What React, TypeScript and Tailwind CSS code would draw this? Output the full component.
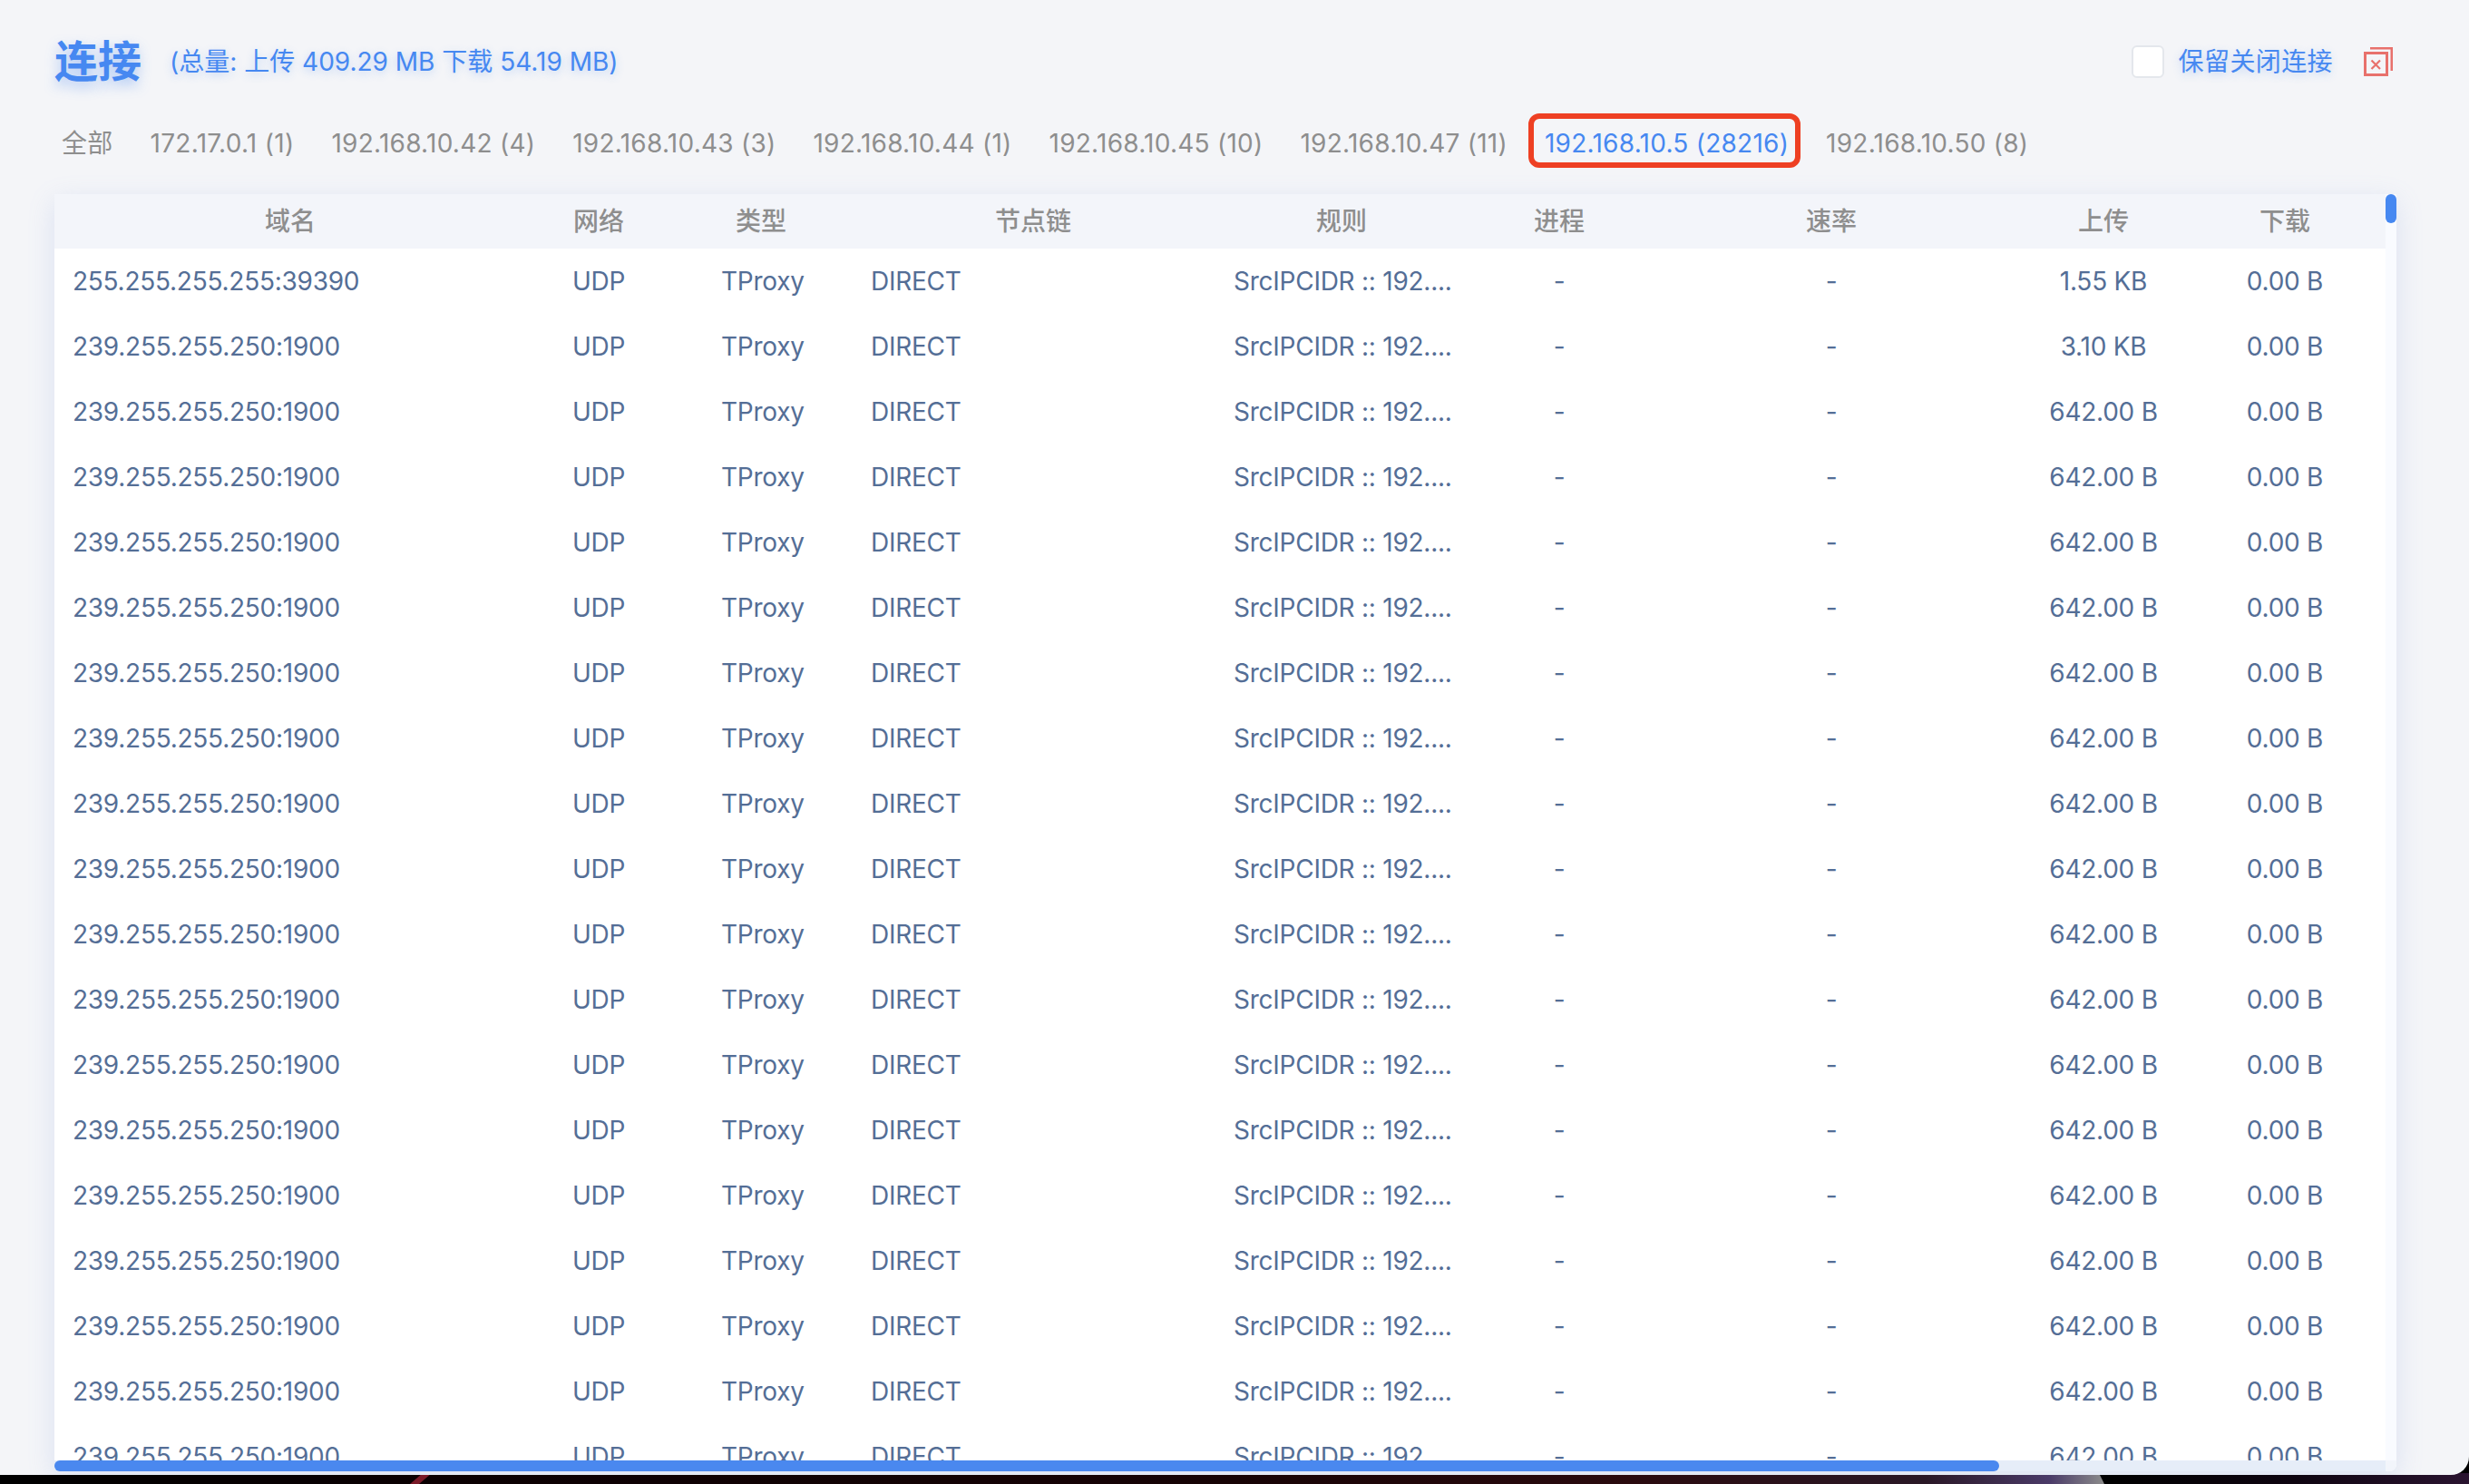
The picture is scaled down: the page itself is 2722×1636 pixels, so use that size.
import React from "react";

const tabs = [
  "全部",
  "172.17.0.1 (1)",
  "192.168.10.42 (4)",
  "192.168.10.43 (3)",
  "192.168.10.44 (1)",
  "192.168.10.45 (10)",
  "192.168.10.47 (11)",
  "192.168.10.5 (28216)",
  "192.168.10.50 (8)",
];

const rows = Array.from({ length: 19 }, (_, i) => ({
  host: i === 0 ? "255.255.255.255:39390" : "239.255.255.250:1900",
  up: i === 0 ? "1.55 KB" : i === 1 ? "3.10 KB" : "642.00 B",
}));

function CloseAll() {
  return (
    <svg width="32" height="32" viewBox="0 0 32 32" fill="none" stroke="#e8716c">
      <rect x="1.5" y="6.5" width="24" height="24" strokeWidth="3" />
      <path d="M7 1.25H30.75V26" strokeWidth="2.5" />
      <path d="M8.5 14.5L18 24M18 14.5L8.5 24" strokeWidth="2.2" />
    </svg>
  );
}

export default function App() {
  return (
    <div className="relative w-[2722px] h-[1636px] overflow-hidden bg-black font-['Inter','Noto_Sans_CJK_SC',sans-serif]">
      <svg className="absolute left-0 bottom-0" width="2722" height="12" viewBox="0 0 2722 12">
        <defs>
          <linearGradient id="wall" x1="0" x2="1" y1="0" y2="0">
            <stop offset="0" stopColor="#000000" />
            <stop offset="0.16" stopColor="#0a0002" />
            <stop offset="0.5" stopColor="#170305" />
            <stop offset="0.66" stopColor="#2a0a0e" />
            <stop offset="0.78" stopColor="#2a1826" />
            <stop offset="0.83" stopColor="#4a3a68" />
            <stop offset="0.852" stopColor="#8a8a8a" />
            <stop offset="0.853" stopColor="#000000" />
            <stop offset="0.93" stopColor="#0e0410" />
            <stop offset="1" stopColor="#2a1430" />
          </linearGradient>
        </defs>
        <rect width="2722" height="12" fill="url(#wall)" />
        <polygon points="452,12 466,0 476,0 462,12" fill="#7a1a28" />
        <polygon points="2314,0 2330,0 2330,12 2320,12" fill="#000000" />
      </svg>

      <div className="relative h-[1626px] overflow-hidden rounded-br-[20px] bg-[#f4f5f8]">
        <header className="flex h-[136px] items-center pl-[60px] pr-[84px]">
          <h1 className="text-[48px] font-bold leading-none text-[#4688f1] [text-shadow:0_6px_14px_rgba(70,136,241,0.4)]">
            连接
          </h1>
          <span className="ml-[31px] text-[28px] text-[#4688f1] [text-shadow:0_3px_10px_rgba(70,136,241,0.3)]">
            (总量: 上传 409.29 MB 下载 54.19 MB)
          </span>
          <label className="ml-auto flex items-center">
            <span className="h-[36px] w-[36px] rounded-[6px] border-2 border-[#e4e7ec] bg-white" />
            <span className="ml-[16px] text-[28px] tracking-[0.4px] text-[#4688f1] [text-shadow:0_3px_10px_rgba(70,136,241,0.3)]">
              保留关闭连接
            </span>
          </label>
          <span className="ml-[34px] flex">
            <CloseAll />
          </span>
        </header>

        <nav className="flex h-[44px] items-center gap-[41px] pl-[68px] text-[28px] tracking-[0.25px] text-[#8e8e8e]">
          {tabs.map((t) =>
            t.includes("28216") ? (
              <span key={t} className="relative text-[#4688f1]">
                {t}
                <span className="absolute -left-[18px] -right-[13px] -top-[12px] -bottom-[6px] rounded-[12px] border-[6px] border-[#ee4023]" />
              </span>
            ) : t.startsWith("172") ? (
              <span key={t} className="tracking-[0.3px]">
                {t}
              </span>
            ) : (
              <span key={t}>{t}</span>
            )
          )}
        </nav>

        <section className="relative ml-[60px] mt-[34px] h-[1408px] w-[2582px] rounded-br-[8px] bg-white shadow-[0_8px_30px_rgba(120,150,220,0.2)]">
          <div className="h-[1396px] w-[2570px] overflow-hidden">
            <table className="w-[2570px] table-fixed text-[28px] text-[#546e96]">
              <colgroup>
                <col className="w-[516px]" />
                <col className="w-[168px]" />
                <col className="w-[190px]" />
                <col className="w-[410px]" />
                <col className="w-[270px]" />
                <col className="w-[210px]" />
                <col className="w-[390px]" />
                <col className="w-[210px]" />
                <col className="w-[190px]" />
                <col className="w-[16px]" />
              </colgroup>
              <thead>
                <tr className="h-[60px] bg-[#f3f5fa] text-center text-[#8e8e8e]">
                  <th className="pl-[4px] font-medium">域名</th>
                  <th className="font-medium">网络</th>
                  <th className="font-medium">类型</th>
                  <th className="font-medium">节点链</th>
                  <th className="font-medium">规则</th>
                  <th className="font-medium">进程</th>
                  <th className="font-medium">速率</th>
                  <th className="font-medium">上传</th>
                  <th className="font-medium">下载</th>
                  <th />
                </tr>
              </thead>
              <tbody className="tracking-[-0.25px]">
                {rows.map((r, i) => (
                  <tr key={i} className="h-[72px]">
                    <td className="pl-[20px]">{r.host}</td>
                    <td className="pl-[55px]">UDP</td>
                    <td className="pl-[51px]">TProxy</td>
                    <td className="pl-[26px]">DIRECT</td>
                    <td className="pl-[16px]">SrcIPCIDR :: 192....</td>
                    <td className="text-center">-</td>
                    <td className="text-center">-</td>
                    <td className="text-center">{r.up}</td>
                    <td className="text-center">0.00 B</td>
                    <td />
                  </tr>
                ))}
              </tbody>
            </table>
          </div>

          <div className="absolute right-0 top-0 h-[1396px] w-[12px] bg-[#f9fbff]">
            <div className="h-[32px] w-[12px] rounded-full bg-[#4688f1]" />
          </div>
          <div className="absolute bottom-0 left-0 h-[12px] w-[2570px] bg-[#e6edf8]">
            <div className="h-[12px] w-[2144px] rounded-full bg-[#4a88ef]" />
          </div>
          <div className="absolute bottom-0 right-0 h-[12px] w-[12px] rounded-br-[8px] bg-[#f2f5fb]" />
        </section>
      </div>
    </div>
  );
}
